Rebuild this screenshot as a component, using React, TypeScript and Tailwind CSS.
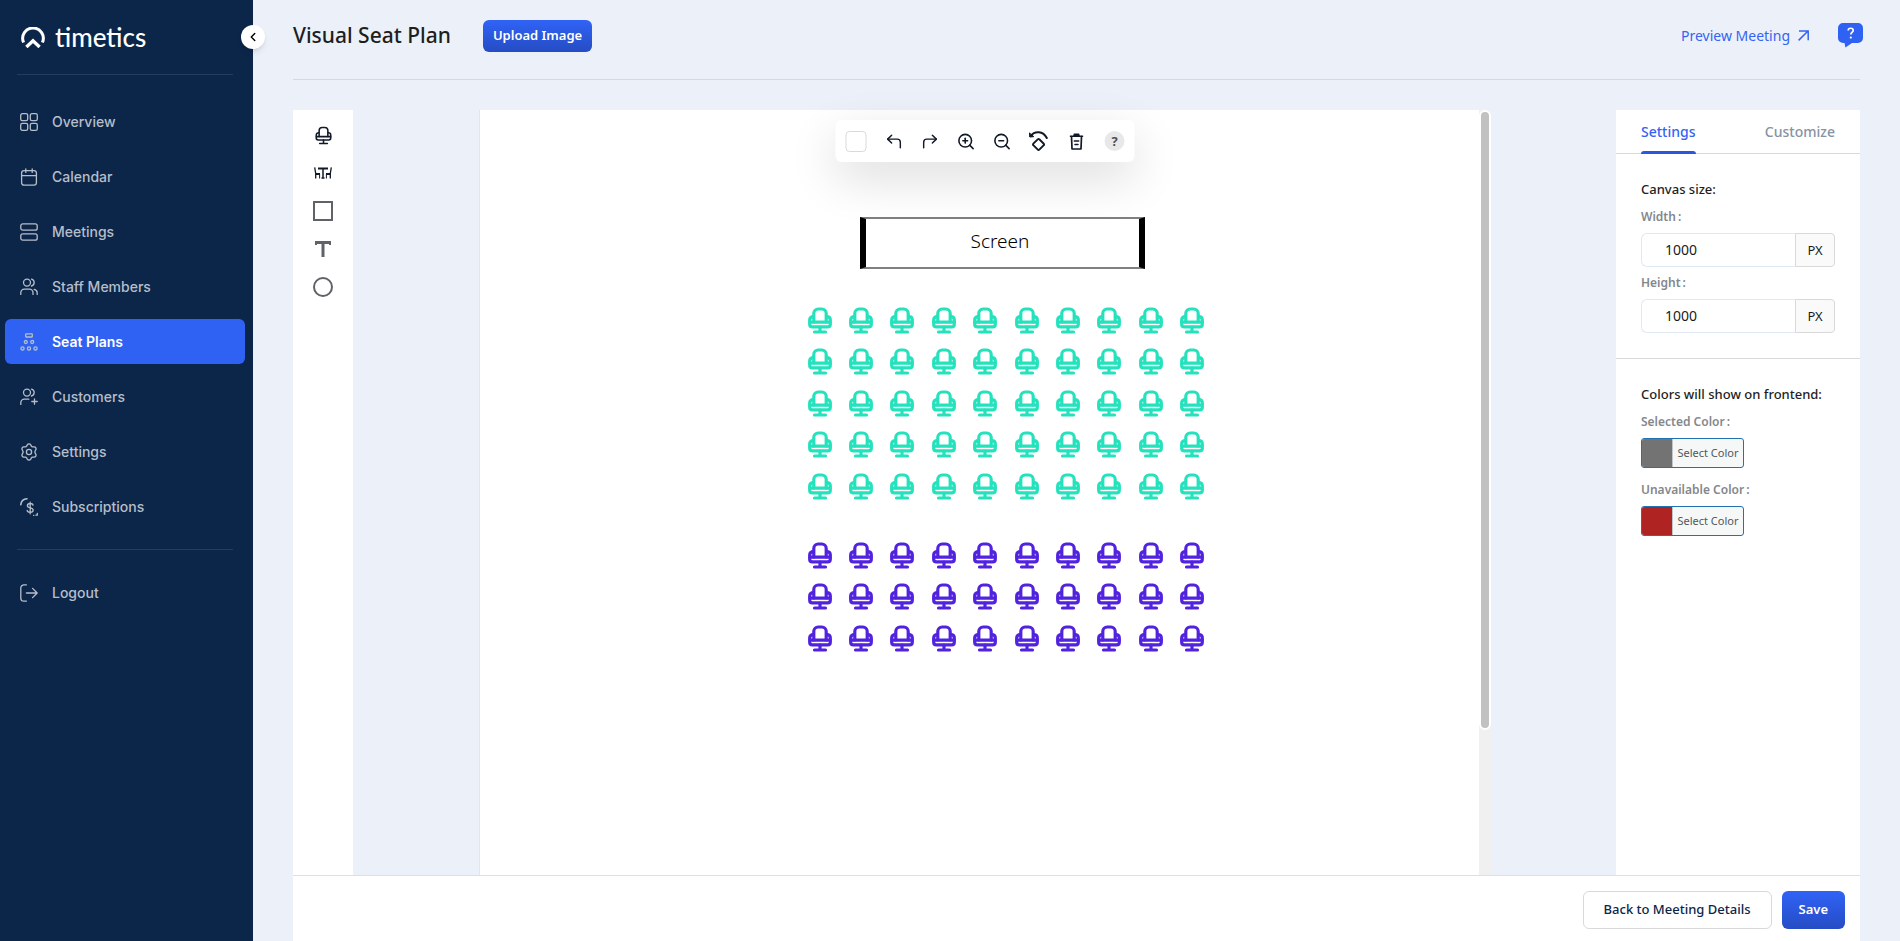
import React, { useState } from 'react'
import { ChevronLeft, CornerUpLeft, CornerUpRight, ZoomIn, ZoomOut } from 'lucide-react'

const iconProps = {
    width: 18,
    height: 18,
    viewBox: '0 0 18 18',
    fill: 'none',
    stroke: 'currentColor',
    strokeWidth: 1.3,
    strokeLinecap: 'round' as const,
    strokeLinejoin: 'round' as const,
    'aria-hidden': true,
}

const OverviewIcon = () => (
    <svg {...iconProps}>
        <rect x="0.7" y="0.7" width="7" height="7" rx="1.6" />
        <rect x="10.3" y="0.7" width="7" height="7" rx="1.6" />
        <rect x="0.7" y="10.3" width="7" height="7" rx="1.6" />
        <rect x="10.3" y="10.3" width="7" height="7" rx="1.6" />
    </svg>
)

const CalendarIcon = () => (
    <svg {...iconProps}>
        <rect x="1.6" y="2.6" width="14.8" height="14.6" rx="2.4" />
        <path d="M1.6 7.6h14.8M5.8 0.8v3.6M12.2 0.8v3.6" />
    </svg>
)

const MeetingsIcon = () => (
    <svg {...iconProps}>
        <rect x="0.8" y="0.8" width="16.4" height="6.4" rx="2" />
        <rect x="0.8" y="10.8" width="16.4" height="6.4" rx="2" />
    </svg>
)

const StaffIcon = () => (
    <svg {...iconProps}>
        <circle cx="7" cy="4.6" r="3.5" />
        <path d="M11.5 1.2a3.5 3.5 0 0 1 0 6.8" />
        <path d="M0.8 16.4v-1.6a3.6 3.6 0 0 1 3.6-3.6h5a3.6 3.6 0 0 1 3.6 3.6v1.6" />
        <path d="M14.2 11.4c1.8.4 3 1.7 3 3.5v1.5" />
    </svg>
)

const SeatPlansIcon = () => (
    <svg {...iconProps}>
        <rect x="5.7" y="0.8" width="6.6" height="3.2" rx="0.4" />
        <circle cx="5.8" cy="9" r="1.5" />
        <circle cx="12.2" cy="9" r="1.5" />
        <circle cx="2.5" cy="15.4" r="1.6" />
        <circle cx="9" cy="15.4" r="1.6" />
        <circle cx="15.5" cy="15.4" r="1.6" />
    </svg>
)

const CustomersIcon = () => (
    <svg {...iconProps}>
        <circle cx="7" cy="4.6" r="3.5" />
        <path d="M11.5 1.2a3.5 3.5 0 0 1 0 6.8" />
        <path d="M0.8 16.4v-1.6a3.6 3.6 0 0 1 3.6-3.6h4.4" />
        <path d="M14.5 10.8v5.4M11.8 13.5h5.4" />
    </svg>
)

const SettingsIcon = () => (
    <svg {...iconProps}>
        <circle cx="9" cy="9" r="2.6" />
        <path d="M7.3 1.9a2 2 0 0 1 3.4 0l.7 1.2a1.5 1.5 0 0 0 1.5.8h1.2a1.9 1.9 0 0 1 1.7 2.9l-.7 1.3a1.7 1.7 0 0 0 0 1.8l.7 1.3a1.9 1.9 0 0 1-1.7 2.9h-1.2a1.5 1.5 0 0 0-1.5.8l-.7 1.2a2 2 0 0 1-3.4 0l-.7-1.2a1.5 1.5 0 0 0-1.5-.8H3.9a1.9 1.9 0 0 1-1.7-2.9l.7-1.3a1.7 1.7 0 0 0 0-1.8l-.7-1.3a1.9 1.9 0 0 1 1.7-2.9h1.2a1.5 1.5 0 0 0 1.5-.8z" />
    </svg>
)

const SubscriptionsIcon = () => (
    <svg {...iconProps}>
        <path d="M0.8 6.6C1.2 3.4 3.7 1 7 0.8" strokeWidth="1.6" />
        <path d="M17.3 15.5v1.7h-1.4M13.6 17.3h.3" />
        <path d="M13 7.2c0-1.1-1.3-1.7-2.8-1.7-1.6 0-2.8.8-2.8 2.2 0 3 5.8 1.5 5.8 4.4 0 1.4-1.3 2.2-3 2.2-1.6 0-3-.7-3-2M10.2 4.2v11.6" />
    </svg>
)

const LogoutIcon = () => (
    <svg {...iconProps}>
        <path d="M6.4 0.8H4A3.2 3.2 0 0 0 0.8 4v10A3.2 3.2 0 0 0 4 17.2h2.4" />
        <path d="M6.4 9h10.8M12.6 4.4 17.2 9l-4.6 4.6" />
    </svg>
)

const SeatIcon = ({ className, strokeWidth = 3.2 }: { className?: string; strokeWidth?: number }) => (
    <svg
        className={className}
        viewBox="0 0 24 27"
        fill="none"
        stroke="currentColor"
        strokeWidth={strokeWidth}
        strokeLinecap="round"
        strokeLinejoin="round"
        aria-hidden
    >
        <path d="M5.8 15V6.4a4.4 4.4 0 0 1 4.400-4.400h3.600a4.400 4.400 0 0 1 4.400 4.400V15" />
        <path d="M5.3 9.7c-2.200 0-3.600 1.200-3.600 3.100v4.400c0 1.700 1.100 2.700 2.700 2.700h15.200c1.600 0 2.700-1 2.700-2.700v-4.400c0-1.900-1.400-3.100-3.600-3.100" />
        <path d="M2 15.100h20M12 20v5M6.500 25h11" />
    </svg>
)

const TableIcon = () => (
    <svg width="18" height="12" viewBox="0 0 18 12" fill="none" stroke="currentColor" aria-hidden>
        <path d="M4 1.500h10" strokeWidth="2" />
        <path d="M9 2v9" strokeWidth="1.500" />
        <path d="M7.500 11h3" strokeWidth="1.500" />
        <path d="M0.700 0.300 1.700 6.500V11.500M17.300 0.300 16.300 6.500V11.500" strokeWidth="1.300" />
        <path d="M1.500 7H6M16.500 7H12" strokeWidth="2" />
        <path d="M5.600 7v4.500M12.400 7v4.500" strokeWidth="1" />
    </svg>
)

const TextToolIcon = () => (
    <svg width="16" height="16" viewBox="0 0 16 16" fill="none" stroke="currentColor" aria-hidden>
        <path d="M0 1.500h16M8 1.500V16" strokeWidth="3" />
        <path d="M1 2v2M15 2v2" strokeWidth="2" />
    </svg>
)

const RotateIcon = () => (
    <svg width="20" height="21" viewBox="0 0 20 21" fill="none" stroke="currentColor" strokeLinecap="round" strokeLinejoin="round" aria-hidden>
        <path d="M9.2 8.3 4.8 12.7a1 1 0 0 0 0 1.500l4.500 4.500a1 1 0 0 0 1.500 0l4.500-4.500a1 1 0 0 0 0-1.500l-4.500-4.400a1.100 1.100 0 0 0-1.600 0z" strokeWidth="1.900" />
        <path d="M2 5C6.300-.6 14.600-.2 18.300 7" strokeWidth="2" />
        <path d="M1 2.300 1.300 6l3.600-.3z" fill="currentColor" strokeWidth="1" />
    </svg>
)

const TrashIcon = () => (
    <svg width="14" height="17" viewBox="0 0 14 17" fill="none" stroke="currentColor" strokeLinecap="round" strokeLinejoin="round" aria-hidden>
        <path d="M0.800 3.300h12.400" strokeWidth="1.600" />
        <path d="M4.300 3 4.800 1h4.400l.5 2z" fill="currentColor" strokeWidth="1.200" />
        <path d="M2 3.500 2.500 16h9L12 3.500" strokeWidth="1.700" />
        <path d="M4.800 8h4.400M5.500 11.500h3" strokeWidth="1.500" />
    </svg>
)

const menus = [
    { name: 'Overview', icon: OverviewIcon },
    { name: 'Calendar', icon: CalendarIcon },
    { name: 'Meetings', icon: MeetingsIcon },
    { name: 'Staff Members', icon: StaffIcon },
    { name: 'Seat Plans', icon: SeatPlansIcon },
    { name: 'Customers', icon: CustomersIcon },
    { name: 'Settings', icon: SettingsIcon },
    { name: 'Subscriptions', icon: SubscriptionsIcon },
]

const MenuLink = ({ name, icon: Icon, active = false }: { name: string; icon: React.FC; active?: boolean }) => (
    <a
        href="#"
        className={`flex h-[45px] items-center gap-[14px] rounded-md pt-px pl-[15px] text-sm ${
            active ? 'bg-[#2f62f3] font-semibold text-white' : 'font-medium text-[#b6bec9]'
        }`}
    >
        <span className="text-[#b6bec9]">
            <Icon />
        </span>
        {name}
    </a>
)

const Sidebar = () => (
    <aside className="relative w-[253px] shrink-0 bg-[#0c264a] font-['Inter',sans-serif]">
        <div className="mr-5 ml-[17px] flex h-[75px] items-center gap-[10px] border-b border-[#253c5c] pl-1">
            <svg width="24" height="21" viewBox="0 0 24 21" fill="none" stroke="white" strokeWidth="3" aria-hidden>
                <path d="M2.600 15.500A10.300 10.300 0 1 1 21.400 15.500" />
                <path d="M5.400 20 12 13.800 18.600 20" strokeWidth="3.400" />
            </svg>
            <span className="font-['Lato',sans-serif] text-[26px] leading-8 font-medium text-white">timetics</span>
        </div>
        <button
            aria-label="Collapse menu"
            className="absolute top-[25px] -right-3 flex size-6 items-center justify-center rounded-full bg-white text-black shadow-md"
        >
            <ChevronLeft size={14} strokeWidth={2.4} />
        </button>
        <nav className="mt-6 flex flex-col gap-[10px] pr-2 pl-[5px]">
            {menus.map((menu) => (
                <MenuLink key={menu.name} {...menu} active={menu.name === 'Seat Plans'} />
            ))}
        </nav>
        <div className="mt-5 mr-5 mb-5 ml-[17px] border-t border-[#253c5c]" />
        <div className="pr-2 pl-[5px]">
            <MenuLink name="Logout" icon={LogoutIcon} />
        </div>
    </aside>
)

const Header = () => (
    <header className="flex h-20 items-center justify-between border-b border-[#d5d9de] pb-2">
        <div className="flex items-center gap-8">
            <h1 className="text-[21px] font-medium text-[#1e1e1e]">Visual Seat Plan</h1>
            <button className="h-8 rounded-md bg-linear-to-b from-[#3063f6] to-[#254cc4] px-[10px] text-[13px] font-semibold text-white">
                Upload Image
            </button>
        </div>
        <div className="-mr-[3px] flex items-center gap-[29px]">
            <a href="#" className="flex items-center gap-2 text-sm text-[#3563f2]">
                Preview Meeting
                <svg width="11" height="11" viewBox="0 0 11 11" fill="none" stroke="currentColor" strokeWidth="1.500" aria-hidden>
                    <path d="M0.600 10.400 10 1M1 1h9.200v9.200" />
                </svg>
            </a>
            <button aria-label="Help" className="relative">
                <svg width="25" height="25" viewBox="0 0 25 25" fill="#2f62f3" aria-hidden>
                    <path d="M5 0h15a5 5 0 0 1 5 5v10a5 5 0 0 1-5 5h-6l-6.600 4.500L6.500 20H5a5 5 0 0 1-5-5V5a5 5 0 0 1 5-5z" />
                    <path d="M10.200 7.500c0-3 5-3 5 0 0 1.800-2.400 2-2.400 4" fill="none" stroke="white" strokeWidth="1.700" />
                    <circle cx="12.800" cy="14.600" r="1.100" fill="white" />
                </svg>
            </button>
        </div>
    </header>
)

const ToolPanel = () => (
    <div className="flex w-[60px] shrink-0 flex-col items-center gap-[14px] bg-white pt-[13px] text-[#5f6368]">
        <button aria-label="Chair" className="flex h-6 items-center text-[#111827]">
            <SeatIcon className="h-[19px] w-[17px]" strokeWidth={2.2} />
        </button>
        <button aria-label="Table" className="flex h-6 items-center text-[#111827]">
            <TableIcon />
        </button>
        <button aria-label="Rectangle" className="flex h-6 items-center">
            <span className="size-5 border-2 border-[#5f6368]" />
        </button>
        <button aria-label="Text" className="flex h-6 items-center">
            <TextToolIcon />
        </button>
        <button aria-label="Circle" className="flex h-6 items-center">
            <span className="size-5 rounded-full border-2 border-[#5f6368]" />
        </button>
    </div>
)

const Toolbar = () => (
    <div className="absolute top-[10px] left-1/2 flex h-[42px] -translate-x-1/2 items-center rounded-md bg-white px-[10px] text-[#111827] shadow-[0_16px_48px_rgba(0,0,0,0.14)]">
        <button aria-label="Background" className="mr-[9px] size-[21px] rounded-sm border border-[#d9d9d9]" />
        <button aria-label="Undo" className="flex w-9 justify-center">
            <CornerUpLeft size={19} strokeWidth={1.8} />
        </button>
        <button aria-label="Redo" className="flex w-9 justify-center">
            <CornerUpRight size={19} strokeWidth={1.8} />
        </button>
        <button aria-label="Zoom in" className="flex w-9 justify-center">
            <ZoomIn size={19} />
        </button>
        <button aria-label="Zoom out" className="flex w-9 justify-center">
            <ZoomOut size={19} />
        </button>
        <button aria-label="Rotate" className="flex w-[38px] justify-center">
            <RotateIcon />
        </button>
        <button aria-label="Delete" className="flex w-[38px] justify-center">
            <TrashIcon />
        </button>
        <button className="ml-[9px] size-5 rounded-full bg-[#e8e8e8] text-[13px] leading-5 font-bold text-[#4b4f58]">?</button>
    </div>
)

const SeatBlock = ({ count, className }: { count: number; className: string }) => (
    <div className={`absolute left-[328px] grid w-[414px] grid-cols-10 ${className}`}>
        {Array.from({ length: count }, (_, i) => (
            <button key={i} aria-label={`Seat ${i + 1}`} className="h-[27px] w-6">
                <SeatIcon className="h-[27px] w-6" />
            </button>
        ))}
    </div>
)

const Canvas = () => (
    <div className="relative flex w-full max-w-[1012px] border-l border-[#e2e6ec] bg-white">
        <div className="relative flex-1">
            <div className="absolute top-[107px] left-[380px] flex h-[52px] w-[285px] items-center justify-center border-x-6 border-y-2 border-x-black border-y-[#808080] pr-1 pb-1 text-[19px] font-light text-black">
                Screen
            </div>
            <SeatBlock count={50} className="top-[197px] h-[207px] grid-rows-5 text-[#25e2bd]" />
            <SeatBlock count={30} className="top-[432px] h-[124px] grid-rows-3 text-[#5223df]" />
        </div>
        <div className="w-3 shrink-0 bg-[#f0f0f0]">
            <div className="h-[81%] rounded-full border-2 border-white bg-[#c1c1c1]" />
        </div>
        <Toolbar />
    </div>
)

const SizeField = ({ id, label, value }: { id: string; label: string; value: string }) => {
    const [size, setSize] = useState<string>(value)
    return (
        <div>
            <label htmlFor={id} className="flex h-8 items-center text-xs font-semibold text-[#84878c]">
                {label}
                <span className="ml-0.5">:</span>
            </label>
            <div className="flex h-[34px] text-sm text-[#1b1b1b]">
                <input
                    id={id}
                    value={size}
                    onChange={(e) => setSize(e.target.value)}
                    className="w-full min-w-0 flex-1 rounded-l-md border border-r-0 border-[#dfe9f3] px-[23px] outline-none"
                />
                <span className="flex w-10 items-center justify-center rounded-r-sm border border-[#d9d9d9] bg-[#fafafa] text-[13px]">PX</span>
            </div>
        </div>
    )
}

const ColorField = ({ label, swatch }: { label: string; swatch: string }) => (
    <div>
        <div className="flex h-8 items-center text-xs font-semibold text-[#84878c]">
            {label}
            <span className="ml-0.5">:</span>
        </div>
        <button
            aria-label={label}
            className="flex h-[30px] w-[103px] items-stretch overflow-hidden rounded-[3px] border border-[#2271b1] bg-[#f6f7f7] text-[11px] text-[#50575e]"
        >
            <span className={`w-[30px] shrink-0 ${swatch}`} />
            <span className="flex flex-1 items-center justify-center border-l border-[#c3c4c7] whitespace-nowrap">Select Color</span>
        </button>
    </div>
)

const SettingsPanel = () => (
    <aside className="w-[244px] shrink-0 bg-white">
        <div className="flex h-11 justify-between border-b border-[#d9d9d9] px-[25px] text-sm font-medium">
            <button className="relative text-[#3563f2]">
                Settings
                <span className="absolute -bottom-px left-0 h-[3px] w-full rounded-t-sm bg-[#2a57dc]" />
            </button>
            <button className="text-[#8693a3]">Customize</button>
        </div>
        <div className="border-b border-[#d9d9d9] px-[25px] pt-[23px] pb-[25px]">
            <h2 className="text-[13px] leading-6 font-medium text-[#1e1e1e]">Canvas size:</h2>
            <SizeField id="canvas-width" label="Width" value="1000" />
            <SizeField id="canvas-height" label="Height" value="1000" />
        </div>
        <div className="px-[25px] pt-[23px]">
            <h2 className="text-[13px] leading-6 font-medium text-[#1e1e1e]">Colors will show on frontend:</h2>
            <div className="flex flex-col gap-[6px]">
                <ColorField label="Selected Color" swatch="bg-[#737373]" />
                <ColorField label="Unavailable Color" swatch="bg-[#af2323]" />
            </div>
        </div>
    </aside>
)

const App = () => {
    return (
        <div className="flex min-h-screen bg-[#ecf1f9] font-['Noto_Sans','Open_Sans',sans-serif]">
            <Sidebar />
            <main className="flex min-w-0 flex-1 flex-col px-10">
                <Header />
                <div className="mt-[30px] flex flex-1">
                    <ToolPanel />
                    <div className="flex flex-1 justify-center">
                        <Canvas />
                    </div>
                    <SettingsPanel />
                </div>
                <footer className="flex h-[66px] items-start justify-end gap-[10px] border-t border-[#dddfe2] bg-white px-[15px] pt-[15px]">
                    <button className="h-[38px] rounded-md border border-[#d9d9d9] px-5 text-[13px] font-medium text-[#0c264a]">
                        Back to Meeting Details
                    </button>
                    <button className="h-[38px] rounded-md bg-linear-to-b from-[#3063f6] to-[#254cc4] px-[17px] text-[13px] font-semibold text-white">
                        Save
                    </button>
                </footer>
            </main>
        </div>
    )
}

export default App
